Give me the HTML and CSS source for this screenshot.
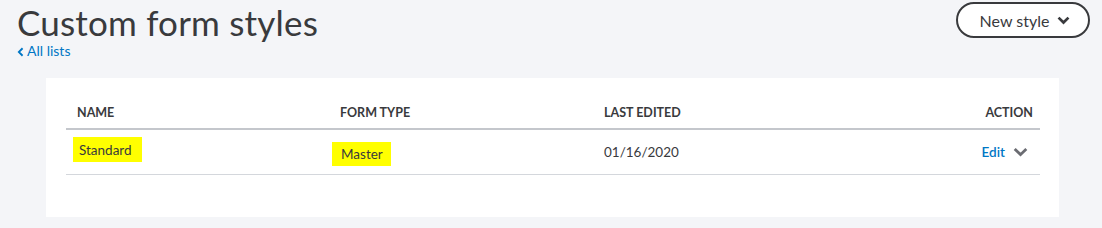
FILE: index.html
```html
<!DOCTYPE html>
<html>
<head>
<meta charset="utf-8">
<link rel="stylesheet" href="styles.css">
</head>
<body>
<div class="page">
  <header class="top">
    <div class="titles">
      <h1 class="title">Custom form styles</h1>
      <a class="back"><svg class="back-ico" viewBox="0 0 8 12" width="7" height="10"><path d="M6.5 1.5 2 6l4.5 4.5" fill="none" stroke="#0077c5" stroke-width="2.2"/></svg>All lists</a>
    </div>
    <button class="new-btn">New style<svg class="btn-ico" viewBox="0 0 14 10" width="13" height="9"><path d="M1.5 1.8 7 7.3l5.5-5.5" fill="none" stroke="#393a3d" stroke-width="3"/></svg></button>
  </header>
  <section class="card">
    <table class="grid">
      <thead>
        <tr>
          <th class="c-name">NAME</th>
          <th class="c-type">FORM TYPE</th>
          <th class="c-date">LAST EDITED</th>
          <th class="c-act">ACTION</th>
        </tr>
      </thead>
      <tbody>
        <tr>
          <td class="c-name"><span class="hl hl-a">Standard</span></td>
          <td class="c-type"><span class="hl hl-b">Master</span></td>
          <td class="c-date">01/16/2020</td>
          <td class="c-act c-act-cell"><a class="edit">Edit</a><svg class="act-ico" viewBox="0 0 16 10" width="15" height="10"><path d="M1.8 1.8 8 7.8l6.2-6" fill="none" stroke="#6b6c72" stroke-width="3"/></svg></td>
        </tr>
      </tbody>
    </table>
  </section>
</div>
</body>
</html>
```
FILE: styles.css
```css
html, body {
  margin: 0;
  padding: 0;
  background: #f4f5f8;
  font-family: "Lato", "Open Sans", sans-serif;
  color: #393a3d;
}
.page {
  width: 1102px;
  height: 228px;
  overflow: hidden;
}
.top {
  display: flex;
  justify-content: space-between;
  align-items: flex-start;
  padding: 0 12px 0 17px;
}
.title {
  margin: 0;
  font-size: 35px;
  font-weight: 400;
  line-height: 44px;
  color: #393a3d;
  letter-spacing: 0.2px;
}
.back {
  display: flex;
  align-items: center;
  gap: 3px;
  font-size: 14px;
  color: #0077c5;
  line-height: 16px;
  margin-top: -1px;
}
.back-ico { margin-top: 2px; }
.new-btn {
  margin-top: 2px;
  height: 36px;
  width: 134px;
  border: 2px solid #393a3d;
  border-radius: 18px;
  background: #fff;
  font-family: inherit;
  font-size: 16px;
  color: #393a3d;
  display: flex;
  align-items: center;
  justify-content: center;
  gap: 8px;
  padding: 0 0 0 4px;
}
.card {
  margin: 19px 43px 0 46px;
  background: #fff;
  height: 139px;
  padding: 20px 19px 0 20px;
  box-sizing: border-box;
}
.grid {
  width: 100%;
  border-collapse: collapse;
}
.grid th {
  font-size: 12.5px;
  font-weight: 700;
  text-align: left;
  padding: 7px 0 8px 0;
  border-bottom: 2px solid #c4c7cc;
  color: #393a3d;
}
.grid td {
  font-size: 13.5px;
  padding: 0;
  height: 44px;
  border-bottom: 1px solid #d4d7dc;
  color: #393a3d;
}
.c-name { width: 263px; padding-left: 11px !important; }
.c-type { width: 264px; }
.c-act { text-align: right !important; padding-right: 7px !important; }
.grid td.c-act-cell { padding-right: 12px !important; }
.hl {
  background: #ffff00;
  display: inline-block;
  line-height: 18px;
}
.hl-a { padding: 4px 10px 3px 6px; margin-left: -4px; position: relative; top: -3px; }
.hl-b { padding: 3px 8px 3px 9px; margin-left: -8px; position: relative; top: 2px; }
.edit {
  color: #0077c5;
  font-weight: 600;
  font-size: 13.5px;
  margin-right: 8px;
}
.act-ico { vertical-align: 0; }
```
